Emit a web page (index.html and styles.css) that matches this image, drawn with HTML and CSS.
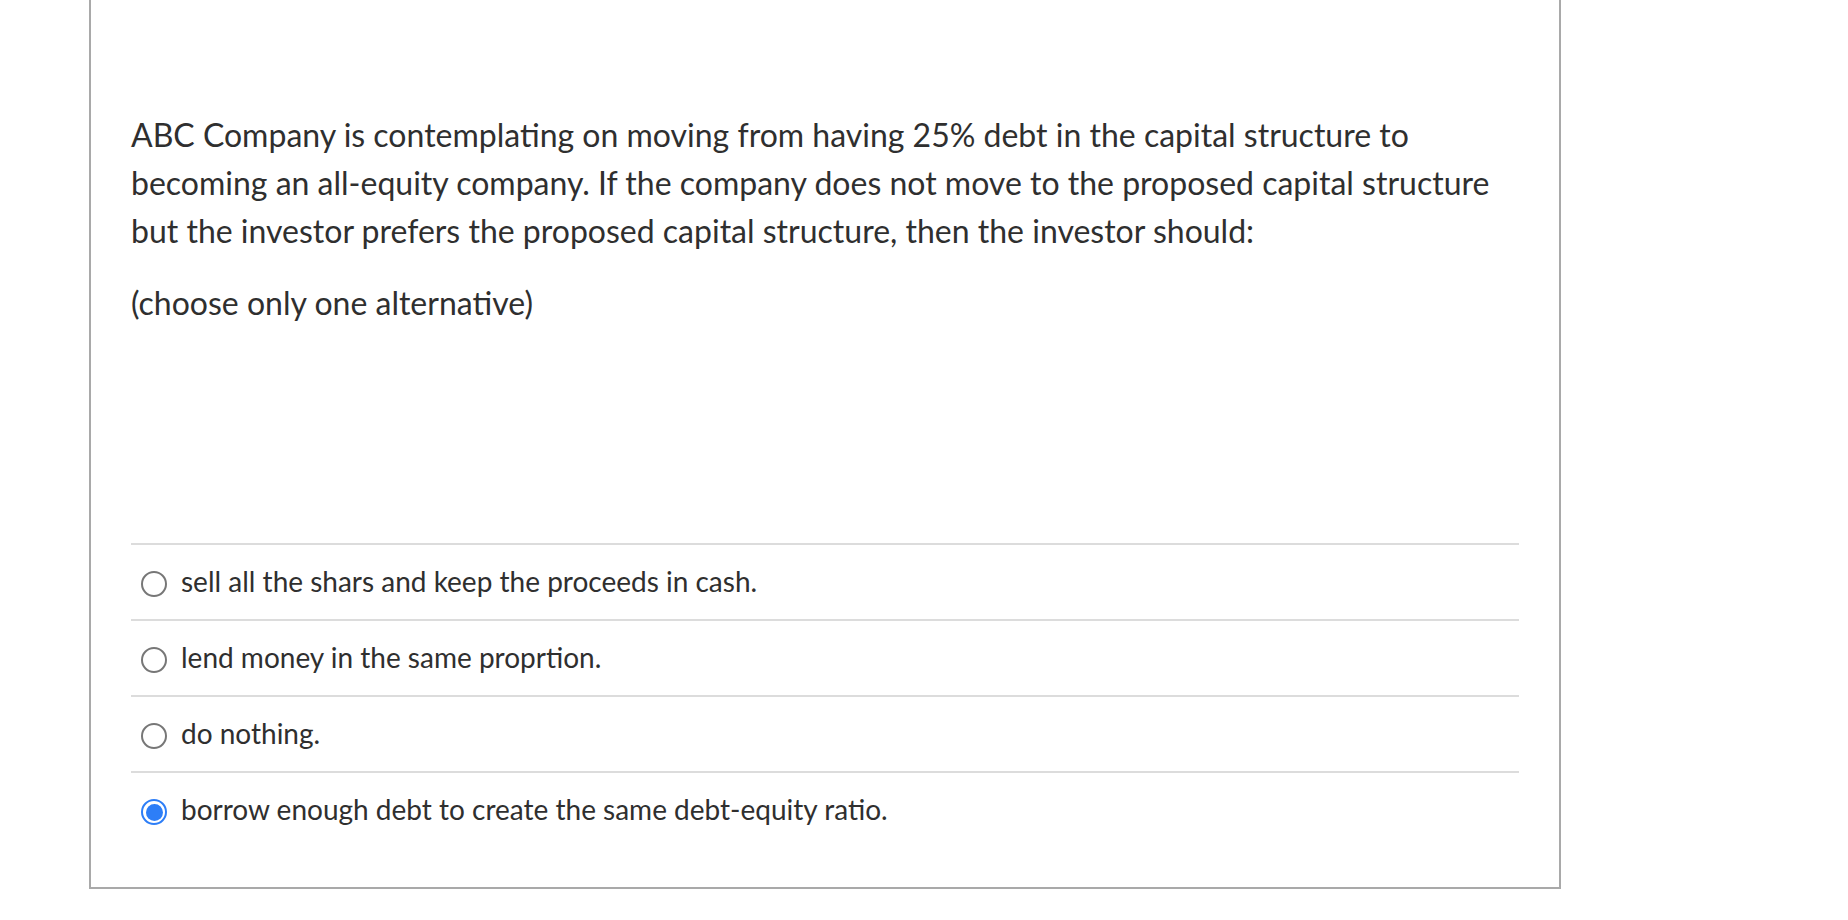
FILE: index.html
```html
<!DOCTYPE html>
<html lang="en">
<head>
<meta charset="utf-8">
<title>Quiz question</title>
<link rel="stylesheet" href="styles.css">
</head>
<body>
<div class="question">
  <div class="question-text">
    <p>ABC Company is contemplating on moving from having 25% debt in the capital structure to becoming an all-equity company. If the company does not move to the proposed capital structure but the investor prefers the proposed capital structure, then the investor should:</p>
    <p>(choose only one alternative)</p>
  </div>
  <div class="answers">
    <label class="answer"><span class="radio"></span><span class="answer-text">sell all the shars and keep the proceeds in cash.</span></label>
    <label class="answer"><span class="radio"></span><span class="answer-text">lend money in the same proprtion.</span></label>
    <label class="answer"><span class="radio"></span><span class="answer-text">do nothing.</span></label>
    <label class="answer"><span class="radio checked"></span><span class="answer-text">borrow enough debt to create the same debt-equity ratio.</span></label>
  </div>
</div>
</body>
</html>
```

FILE: styles.css
```css
html, body {
  margin: 0;
  padding: 0;
  background: #ffffff;
}
body {
  padding-left: 89px;
  font-family: Lato, "Open Sans", "Liberation Sans", sans-serif;
  color: #2f2f2f;
}
.question {
  box-sizing: border-box;
  width: 1472px;
  border: 2px solid #a9a9a9;
  border-top: 0;
  padding: 111px 40px 40px 40px;
}
.question-text p {
  margin: 0 0 24px 0;
  font-size: 32px;
  line-height: 48px;
}
.question-text p:last-child {
  margin-bottom: 0;
}
.answers {
  margin-top: 216px;
}
.answer {
  display: flex;
  align-items: center;
  height: 74px;
  border-top: 2px solid #dcdcdc;
  padding-left: 10px;
  font-size: 28px;
}
.radio {
  box-sizing: border-box;
  flex: none;
  width: 26px;
  height: 26px;
  border: 2px solid #777777;
  border-radius: 50%;
  margin-top: 4px;
  margin-right: 14px;
  background: #fff;
}
.radio.checked {
  border: 2.5px solid #2d7ef7;
  padding: 2.5px;
  background: #2d7ef7;
  background-clip: content-box;
}
.answer-text {
  line-height: 34px;
  margin-bottom: 3px;
}
```
